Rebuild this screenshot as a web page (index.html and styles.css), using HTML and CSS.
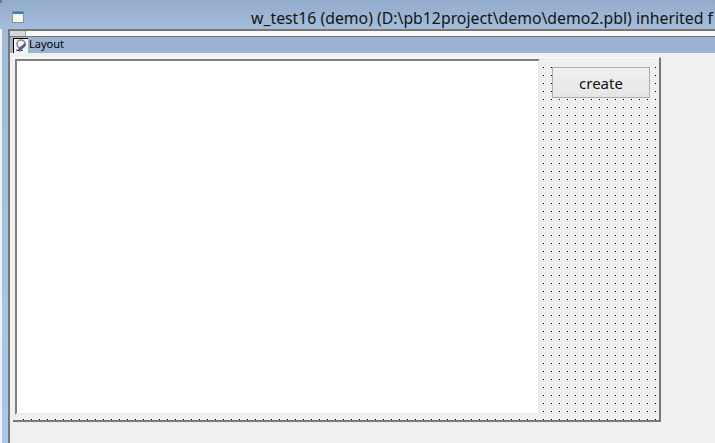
FILE: index.html
```html
<!DOCTYPE html>
<html lang="en">
<head>
<meta charset="utf-8">
<title>w_test16</title>
<link rel="stylesheet" href="styles.css">
</head>
<body>
<div class="app">
  <header class="titlebar">
    <svg class="app-icon" width="12" height="12" viewBox="0 0 12 12">
      <rect x="0" y="0" width="12" height="12" fill="#7f8ea3"/>
      <rect x="1" y="1" width="10" height="2" fill="#2f7fd0"/>
      <rect x="1" y="3" width="10" height="8" fill="#f7f9e8"/>
    </svg>
    <span class="title-text">w_test16 (demo) (D:\pb12project\demo\demo2.pbl) inherited f</span>
  </header>
  <div class="workspace">
    <div class="side"></div>
    <div class="mdi">
      <div class="toolbar"><div class="handle"></div></div>
      <div class="wintitle">
        <svg class="layout-icon" width="15" height="15" viewBox="0 0 15 15">
          <rect width="15" height="15" fill="#000"/>
          <rect x="1" y="1" width="14" height="14" fill="#f4f4f4"/>
          <circle cx="8" cy="6" r="4" fill="none" stroke="#8a8a8a" stroke-width="1.6"/>
          <path d="M12 5 L6 10 L4 13 L8 12 L13 7 Z" fill="#5a4f9c"/>
          <path d="M3 12 L7 13 L10 12" stroke="#333" fill="none"/>
        </svg>
        <span class="wintitle-text">Layout</span>
      </div>
      <div class="body">
        <div class="canvas">
          <div class="listbox"></div>
          <button class="create-btn" type="button">create</button>
        </div>
      </div>
    </div>
  </div>
</div>
</body>
</html>
```
FILE: styles.css
```css
html, body { margin: 0; padding: 0; }
body { background: #f0f0f0; overflow: hidden; }
.app { width: 715px; height: 443px; display: flex; flex-direction: column; overflow: hidden; background: #f0f0f0; }
.titlebar {
  height: 29px; flex: none; display: flex; align-items: center; padding-left: 12px;
  background: linear-gradient(#777, #777) no-repeat 0 0 / 2px 3px, linear-gradient(#92abcb, #a4bedb);
  white-space: nowrap; overflow: hidden;
}
.app-icon { flex: none; margin-top: 5px; }
.title-text { margin-left: 227px; margin-top: 6px; font: 15.8px "Noto Sans", sans-serif; color: #141414; }
.workspace { flex: 1; display: flex; min-height: 0; }
.side { width: 6px; border-left: 2px solid #eef1f5; background: linear-gradient(#a0bad8, #a9c9ea); }
.mdi { flex: 1; display: flex; flex-direction: column; border-left: 2px solid #777; min-width: 0; }
.toolbar { height: 5px; border-top: 2px solid #777; border-bottom: 1px solid #777; background: #f8f8f8; flex: none; }
.handle { width: 15px; height: 100%; background: #d8d8d8; border-right: 1px solid #999; }
.wintitle { height: 16px; display: flex; align-items: center; padding-left: 3px; background: #9ab3d1; flex: none; }
.layout-icon { flex: none; }
.wintitle-text { margin: 0 0 3px 1px; font: 11px "Noto Sans", sans-serif; color: #000; }
.body { flex: 1; display: flex; padding: 4px 54px 21px 3px; min-height: 0; }
.canvas {
  flex: 1; display: flex; align-items: flex-start; padding: 1px 0 5px 2px;
  border-top: 1px solid #fbfbfb; border-right: 2px solid #777; border-bottom: 2px solid #777;
  background-color: #f0f0f0;
  background-image:
    linear-gradient(#f0f0f0, #f0f0f0),
    linear-gradient(#f0f0f0, #f0f0f0),
    conic-gradient(from 0deg at 1px 1px, transparent 75%, #000 0);
  background-size: 100% 2px, 3px 100%, 8px 8px;
  background-position: 0 0, 0 0, 2px 1px;
  background-repeat: no-repeat, no-repeat, repeat;
}
.listbox {
  width: 525px; height: 356px; box-sizing: border-box; background: #fff; flex: none;
  border-top: 2px solid #808080; border-left: 2px solid #808080;
  border-right: 2px solid #ececec; border-bottom: 2px solid #ececec;
}
.create-btn {
  width: 98px; height: 31px; margin: 8px 0 0 12px; padding: 0; flex: none;
  border: 1px solid #adadad; background: linear-gradient(#f1f1f1, #e5e5e5);
  font: 15px "Noto Sans", sans-serif; color: #111;
}
```
